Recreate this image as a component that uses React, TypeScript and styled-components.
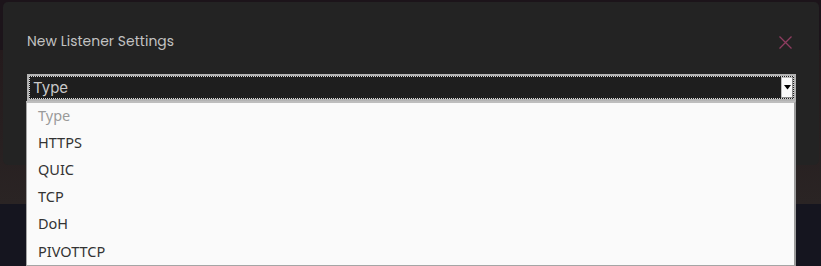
import React from "react";
import styled, { createGlobalStyle } from "styled-components";

const Global = createGlobalStyle`
  html, body { margin: 0; padding: 0; background: #16161f; }
  #root { width: 821px; height: 266px; overflow: hidden; }
`;

const Page = styled.div`
  position: relative;
  width: 821px;
  height: 266px;
  display: flex;
  flex-direction: column;
  background: #16161f;
`;

const BackTop = styled.div`
  height: 50px;
  background: #1c141a;
`;

const BackMid = styled.div`
  height: 154px;
  background: linear-gradient(180deg, #241a1c 0%, #2a2424 100%);
`;

const BackBottom = styled.div`
  flex: 1;
  background: #15151f;
`;

const Modal = styled.div`
  position: absolute;
  left: 3px;
  top: 2px;
  width: 816px;
  height: 163px;
  box-sizing: border-box;
  background: #232323;
  border-radius: 5px;
  padding: 30px 23px 0 24px;
  display: flex;
  flex-direction: column;
  gap: 22px;
`;

const Header = styled.div`
  display: flex;
  align-items: center;
  justify-content: space-between;
  height: 20px;
`;

const Title = styled.div`
  font-family: "Poppins", "Inter", "Noto Sans", sans-serif;
  font-size: 13.9px;
  color: #c2c2c2;
  letter-spacing: 0.05px;
  margin-top: -1px;
`;

const Close = styled.button`
  background: none;
  border: none;
  padding: 0;
  width: 14px;
  height: 14px;
  margin-right: 4px;
  display: flex;
  align-items: center;
  justify-content: center;
`;

const SelectBox = styled.div`
  position: relative;
  height: 27px;
  box-sizing: border-box;
  border: 2px solid #b3b3b3;
  background: #1e1e1e;
  display: flex;
  align-items: center;
  outline: 1px dotted #d8d8d8;
  outline-offset: -3px;
`;

const SelectText = styled.span`
  flex: 1;
  padding-left: 4px;
  font-family: "Inter", "Noto Sans", sans-serif;
  font-size: 15px;
  color: #c9c9c9;
`;

const Arrow = styled.div`
  width: 12px;
  height: 21px;
  margin-right: 1px;
  box-sizing: border-box;
  background: #fafafa;
  border: 1px solid #bdbdbd;
  border-right-color: #8a8a8a;
  border-bottom-color: #8a8a8a;
  display: flex;
  align-items: center;
  justify-content: center;
`;

const List = styled.ul`
  position: absolute;
  left: 26px;
  top: 101px;
  width: 770px;
  height: 165px;
  box-sizing: border-box;
  margin: 0;
  padding: 0;
  list-style: none;
  background: #fafafa;
  border: 1px solid #a5a5a5;
  border-top: 2px solid #bdbdbd;
  border-right: 2px solid #9a9a9a;
`;

const Item = styled.li<{ $placeholder?: boolean }>`
  height: 27.2px;
  box-sizing: border-box;
  padding-bottom: 4px;
  display: flex;
  align-items: center;
  padding-left: 11px;
  font-family: "Noto Sans", sans-serif;
  font-size: 14.5px;
  color: ${(p) => (p.$placeholder ? "#9a9a9a" : "#333")};
`;

const options = ["HTTPS", "QUIC", "TCP", "DoH", "PIVOTTCP"];

export default function App() {
  return (
    <Page>
      <Global />
      <BackTop />
      <BackMid />
      <BackBottom />
      <Modal>
        <Header>
          <Title>New Listener Settings</Title>
          <Close aria-label="close">
            <svg width="13" height="13" viewBox="0 0 13 13">
              <path d="M0.5 0.5 L12.5 12.5 M12.5 0.5 L0.5 12.5" stroke="#8e3c60" strokeWidth="1.3" />
            </svg>
          </Close>
        </Header>
        <SelectBox>
          <SelectText>Type</SelectText>
          <Arrow>
            <svg width="7" height="5" viewBox="0 0 7 5">
              <path d="M0 0 H7 L3.5 4.5 Z" fill="#000" />
            </svg>
          </Arrow>
        </SelectBox>
      </Modal>
      <List>
        <Item $placeholder>Type</Item>
        {options.map((o) => (
          <Item key={o}>{o}</Item>
        ))}
      </List>
    </Page>
  );
}
